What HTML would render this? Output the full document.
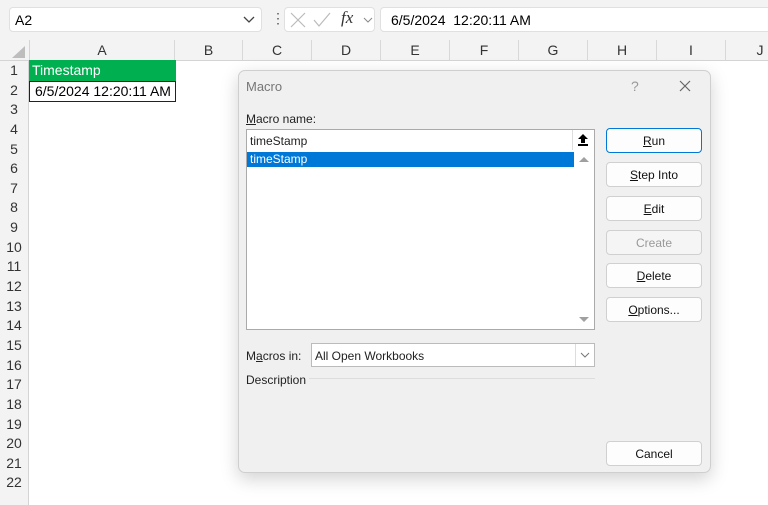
<!DOCTYPE html>
<html><head><style>
*{box-sizing:border-box;margin:0;padding:0}
body{width:768px;height:505px;overflow:hidden;background:#fff;font-family:"Liberation Sans",sans-serif;position:relative}
.a{position:absolute}
.top{left:0;top:0;width:768px;height:40px;background:#f3f3f3}
.box{background:#fff;border:1px solid #e0e0e0;border-radius:4px}
.hdr{top:40px;height:21px;background:#f3f3f3;border-bottom:1px solid #d4d4d4;left:0;width:768px}
.ch{top:40px;height:20px;font-size:14px;color:#333;text-align:center;line-height:20px;border-right:1px solid #d8d8d8}
.rh{left:0;width:29px;background:#f3f3f3;font-size:14px;color:#333;text-align:center;border-right:1px solid #d4d4d4}
.dlg{left:238px;top:70px;width:473px;height:403px;background:#f0f0f0;border:1px solid #cfcfcf;border-radius:7px;box-shadow:0 6px 18px rgba(0,0,0,.18)}
.btn{left:606px;width:96px;height:25px;background:#fdfdfd;border:1px solid #d0d0d0;border-radius:4px;font-size:12px;text-align:center;line-height:25px;color:#111}
.t{font-size:12px;color:#222}
</style></head><body>
<div class="a top"></div>
<div class="a box" style="left:9px;top:7px;width:253px;height:25px"></div>
<div class="a" style="left:15px;top:12px;font-size:14px">A2</div>
<svg class="a" style="left:243px;top:16px" width="12" height="8"><path d="M1 1l5 5 5-5" fill="none" stroke="#444" stroke-width="1.3"/></svg>
<div class="a" style="left:271px;top:10px;font-size:14px;color:#555">&#8942;</div>
<div class="a box" style="left:284px;top:7px;width:91px;height:25px"></div>
<svg class="a" style="left:290px;top:12px" width="16" height="16"><path d="M1 1l14 14M15 1L1 15" stroke="#bbb" stroke-width="1.2"/></svg>
<svg class="a" style="left:313px;top:12px" width="18" height="16"><path d="M1 8l5 6L17 1" fill="none" stroke="#bbb" stroke-width="1.2"/></svg>
<div class="a" style="left:341px;top:8px;font-size:17px;font-style:italic;font-family:'Liberation Serif',serif;color:#333">fx</div>
<svg class="a" style="left:363px;top:17px" width="10" height="6"><path d="M1 1l4 4 4-4" fill="none" stroke="#888" stroke-width="1"/></svg>
<div class="a box" style="left:380px;top:7px;width:400px;height:25px"></div>
<div class="a" style="left:391px;top:12px;font-size:14px">6/5/2024&nbsp; 12:20:11 AM</div>
<div class="a hdr"></div>
<div class="a" style="left:12px;top:46px;width:0;height:0;border-left:13px solid transparent;border-bottom:12px solid #bdbdbd"></div>
<div class="a ch" style="left:29px;width:146px;border-left:1px solid #d4d4d4">A</div>
<div class="a ch" style="left:175px;width:68px">B</div>
<div class="a ch" style="left:243px;width:69px">C</div>
<div class="a ch" style="left:312px;width:69px">D</div>
<div class="a ch" style="left:381px;width:69px">E</div>
<div class="a ch" style="left:450px;width:69px">F</div>
<div class="a ch" style="left:519px;width:69px">G</div>
<div class="a ch" style="left:588px;width:69px">H</div>
<div class="a ch" style="left:657px;width:69px">I</div>
<div class="a ch" style="left:726px;width:69px">J</div>
<div class="a rh" style="top:61px;height:444px"></div>
<div class="a" style="left:0;top:61px">
<div class="rh" style="height:19.65px;line-height:19.65px">1</div><div class="rh" style="height:19.65px;line-height:19.65px">2</div><div class="rh" style="height:19.65px;line-height:19.65px">3</div><div class="rh" style="height:19.65px;line-height:19.65px">4</div><div class="rh" style="height:19.65px;line-height:19.65px">5</div><div class="rh" style="height:19.65px;line-height:19.65px">6</div><div class="rh" style="height:19.65px;line-height:19.65px">7</div><div class="rh" style="height:19.65px;line-height:19.65px">8</div><div class="rh" style="height:19.65px;line-height:19.65px">9</div><div class="rh" style="height:19.65px;line-height:19.65px">10</div><div class="rh" style="height:19.65px;line-height:19.65px">11</div><div class="rh" style="height:19.65px;line-height:19.65px">12</div><div class="rh" style="height:19.65px;line-height:19.65px">13</div><div class="rh" style="height:19.65px;line-height:19.65px">14</div><div class="rh" style="height:19.65px;line-height:19.65px">15</div><div class="rh" style="height:19.65px;line-height:19.65px">16</div><div class="rh" style="height:19.65px;line-height:19.65px">17</div><div class="rh" style="height:19.65px;line-height:19.65px">18</div><div class="rh" style="height:19.65px;line-height:19.65px">19</div><div class="rh" style="height:19.65px;line-height:19.65px">20</div><div class="rh" style="height:19.65px;line-height:19.65px">21</div><div class="rh" style="height:19.65px;line-height:19.65px">22</div>
</div>
<div class="a" style="left:29px;top:60px;width:147px;height:21px;background:#00b050;color:#fff;font-size:14px;line-height:21px;padding-left:3px">Timestamp</div>
<div class="a" style="left:29px;top:81px;width:147px;height:21px;border:1px solid #222;font-size:14px;line-height:19px;padding-left:5px">6/5/2024 12:20:11 AM</div>

<div class="a dlg"></div>
<div class="a" style="left:246px;top:79px;font-size:13px;color:#777">Macro</div>
<div class="a" style="left:631px;top:78px;font-size:14px;color:#999">?</div>
<svg class="a" style="left:679px;top:80px" width="12" height="12"><path d="M1 1l10 10M11 1L1 11" stroke="#666" stroke-width="1.2"/></svg>
<div class="a t" style="left:246px;top:112px"><u>M</u>acro name:</div>
<div class="a" style="left:246px;top:129px;width:349px;height:23px;background:#fff;border:1px solid #aaa"></div>
<div class="a t" style="left:250px;top:134px">timeStamp</div>
<div class="a" style="left:572px;top:130px;width:22px;height:20px;background:#fff;border-left:1px solid #ddd"></div>
<svg class="a" style="left:577px;top:133px" width="12" height="14"><path d="M6 1L1 6h3v4h4V6h3z" fill="#000"/><rect x="1" y="11" width="10" height="2" fill="#000"/></svg>
<div class="a" style="left:246px;top:151px;width:349px;height:179px;background:#fff;border:1px solid #aaa;border-top:none"></div>
<div class="a" style="left:247px;top:152px;width:327px;height:15px;background:#0078d7;color:#fff;font-size:12px;line-height:15px;padding-left:3px">timeStamp</div>
<div class="a" style="left:579px;top:157px;width:0;height:0;border-left:5px solid transparent;border-right:5px solid transparent;border-bottom:5px solid #a0a0a0"></div>
<div class="a" style="left:579px;top:317px;width:0;height:0;border-left:5px solid transparent;border-right:5px solid transparent;border-top:5px solid #a0a0a0"></div>
<div class="a btn" style="top:128px;border-color:#0078d7"><u>R</u>un</div>
<div class="a btn" style="top:162px"><u>S</u>tep Into</div>
<div class="a btn" style="top:196px"><u>E</u>dit</div>
<div class="a btn" style="top:230px;color:#999;background:#f5f5f5">Create</div>
<div class="a btn" style="top:263px"><u>D</u>elete</div>
<div class="a btn" style="top:297px"><u>O</u>ptions...</div>
<div class="a btn" style="top:441px">Cancel</div>
<div class="a t" style="left:246px;top:349px">M<u>a</u>cros in:</div>
<div class="a" style="left:311px;top:343px;width:284px;height:24px;background:#fff;border:1px solid #bbb"></div>
<div class="a t" style="left:315px;top:349px">All Open Workbooks</div>
<div class="a" style="left:575px;top:344px;width:19px;height:22px;border-left:1px solid #ddd"></div>
<svg class="a" style="left:580px;top:352px" width="10" height="6"><path d="M1 1l4 4 4-4" fill="none" stroke="#777" stroke-width="1"/></svg>
<div class="a t" style="left:246px;top:373px">Description</div>
<div class="a" style="left:309px;top:378px;width:286px;height:1px;background:#ddd"></div>
</body></html>
